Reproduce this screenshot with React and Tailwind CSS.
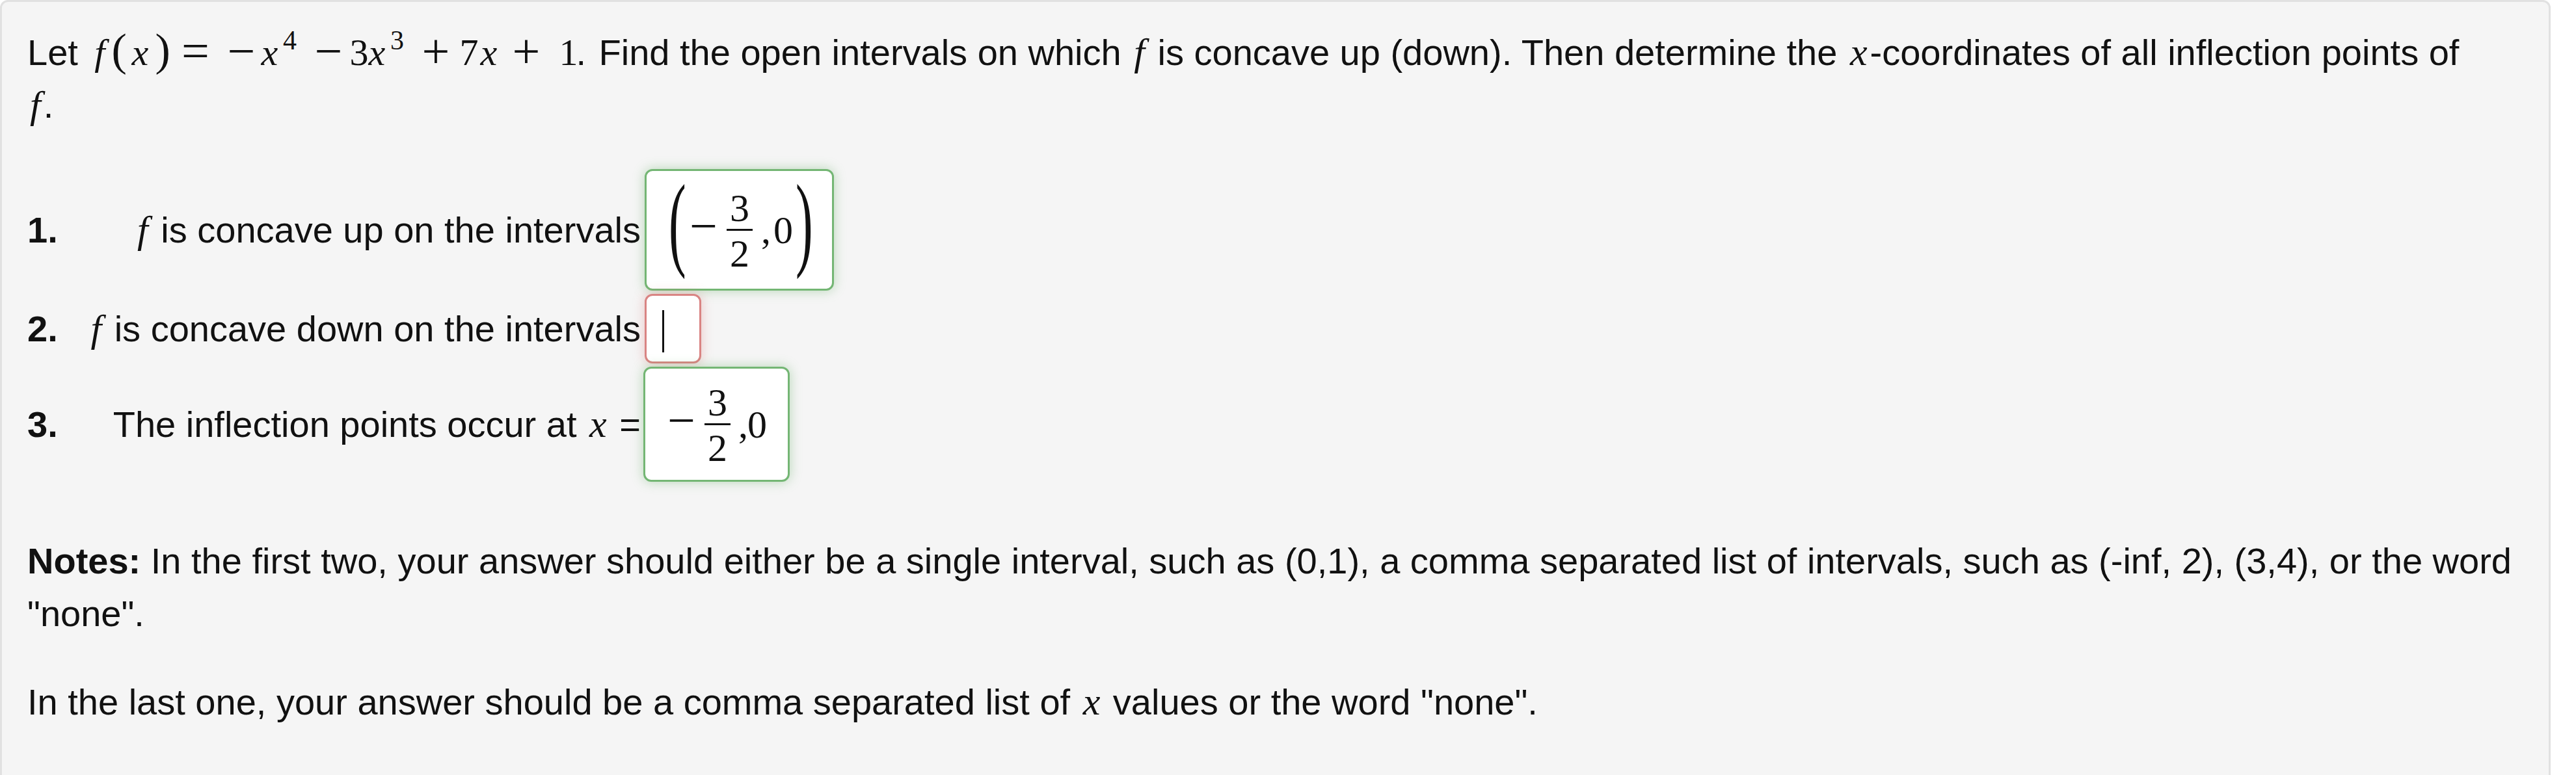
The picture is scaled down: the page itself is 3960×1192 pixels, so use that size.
import React from "react";

const Frac = ({ n, d }) => (
  <span className="inline-flex w-[40px] flex-col items-center leading-none">
    <span className="pt-[3px]">{n}</span>
    <span className="h-[3px] self-stretch bg-[#111] mt-[2px]"></span>
    <span className="mt-[5px]">{d}</span>
  </span>
);

const V = ({ children }) => (
  <i className="inline-block px-[4px] italic font-['Liberation_Serif',serif] text-[60px]">{children}</i>
);

const BigParen = ({ c }) => (
  <span className="inline-block w-[20px] text-center text-[80px] leading-none scale-y-[2] -translate-y-[13px]">{c}</span>
);

export default function App() {
  return (
    <div className="min-h-[1192px] bg-white">
      <div className="w-[3921px] h-[1230px] rounded-[12px] border-[3px] border-[#e1e1e1] bg-[#f5f5f5] pl-[39px] pr-[40px] pt-[33px] font-['Liberation_Sans',Arial,sans-serif] text-[56px] leading-[81px] text-[#111]">
        <p>
          Let{" "}
          <span className="font-['Liberation_Serif',serif] text-[58px] whitespace-nowrap">
            <span className="inline-block w-[36px] text-center italic">f</span>
            <span className="inline-block w-[22px] text-center text-[70px] leading-none">(</span>
            <span className="inline-block ml-[4px] w-[36px] text-center italic">x</span>
            <span className="inline-block ml-[5px] w-[17px] text-center text-[70px] leading-none">)</span>
            <span className="inline-block relative top-[4px] ml-[23px] w-[44px] text-center text-[76px] leading-none">=</span>
            <span className="inline-block relative top-[4px] ml-[27px] w-[32px] text-center text-[76px] leading-none">−</span>
            <span className="inline-block ml-[17px] w-[32px] text-center italic">x</span>
            <span className="inline-block relative -top-[24px] ml-[4px] w-[22px] text-center text-[42px] leading-none">4</span>
            <span className="inline-block relative top-[4px] ml-[27px] w-[31px] text-center text-[76px] leading-none">−</span>
            <span className="inline-block ml-[23px] w-[22px] text-center">3</span>
            <span className="inline-block ml-[4px] w-[32px] text-center italic">x</span>
            <span className="inline-block relative -top-[24px] ml-[4px] w-[22px] text-center text-[42px] leading-none">3</span>
            <span className="inline-block relative top-[4px] ml-[27px] w-[41px] text-center text-[76px] leading-none">+</span>
            <span className="inline-block ml-[17px] w-[23px] text-center">7</span>
            <span className="inline-block ml-[4px] w-[36px] text-center italic">x</span>
            <span className="inline-block relative top-[4px] ml-[18px] w-[40px] text-center text-[76px] leading-none">+</span>
            <span className="inline-block ml-[32px] w-[26px] text-center">1</span>
          </span>
          .<span className="ml-[4px]"> </span>Find the open intervals on which <V>f</V> is concave up (down). Then
          determine the <V>x</V>-coordinates of all inflection points of
          <br />
          <V>f</V>.
        </p>

        <div className="mt-[58px] flex flex-col gap-[5px]">
          <div className="flex items-center">
            <span className="w-[74px] shrink-0 font-bold">1.</span>
            <span className="w-[869px] shrink-0 flex justify-end whitespace-nowrap">
              <span>
                <V>f</V> is concave up on the intervals
              </span>
            </span>
            <div className="ml-[6px] w-[291px] h-[187px] shrink-0 rounded-[12px] border-[3px] border-[#74b674] bg-white shadow-[0_0_18px_rgba(90,170,90,0.4)] flex items-center font-['Liberation_Serif',serif] text-[60px] leading-none">
              <span className="ml-[34px]">
                <BigParen c="(" />
              </span>
              <span className="inline-block ml-[12px] w-[38px] text-center text-[76px] leading-none -translate-y-[7px]">−</span>
              <span className="ml-[19px]">
                <Frac n="3" d="2" />
              </span>
              <span className="inline-block ml-[13px] w-[10px] text-center">,</span>
              <span className="inline-block ml-[8px] w-[32px] text-center">0</span>
              <span className="ml-[3px]">
                <BigParen c=")" />
              </span>
            </div>
          </div>

          <div className="flex items-center">
            <span className="w-[74px] shrink-0 font-bold">2.</span>
            <span className="w-[869px] shrink-0 flex justify-end whitespace-nowrap">
              <span>
                <V>f</V> is concave down on the intervals
              </span>
            </span>
            <div className="ml-[6px] w-[87px] h-[107px] shrink-0 rounded-[12px] border-[3px] border-[#d98483] bg-white shadow-[0_0_18px_rgba(215,110,110,0.35)] flex items-center pl-[24px]">
              <div className="w-[3px] h-[65px] bg-[#111] translate-y-[4px]"></div>
            </div>
          </div>

          <div className="flex items-center">
            <span className="w-[74px] shrink-0 font-bold">3.</span>
            <span className="w-[869px] shrink-0 flex justify-end whitespace-nowrap">
              <span>
                The inflection points occur at <V>x</V> =
              </span>
            </span>
            <div className="ml-[4px] w-[225px] h-[177px] shrink-0 rounded-[12px] border-[3px] border-[#74b674] bg-white shadow-[0_0_18px_rgba(90,170,90,0.4)] flex items-center font-['Liberation_Serif',serif] text-[60px] leading-none">
              <span className="inline-block ml-[34px] w-[39px] text-center text-[76px] leading-none -translate-y-[7px]">−</span>
              <span className="ml-[18px]">
                <Frac n="3" d="2" />
              </span>
              <span className="inline-block ml-[12px] w-[10px] text-center">,</span>
              <span className="inline-block ml-[4px] w-[28px] text-center">0</span>
            </div>
          </div>
        </div>

        <p className="mt-[81px]">
          <b className="font-bold">Notes:</b> In the first two, your answer should either be a single interval, such as
          (0,1), a comma separated list of intervals, such as (-inf, 2), (3,4), or the word "none".
        </p>
        <p className="mt-[55px]">
          In the last one, your answer should be a comma separated list of <V>x</V> values or the word "none".
        </p>
      </div>
    </div>
  );
}
